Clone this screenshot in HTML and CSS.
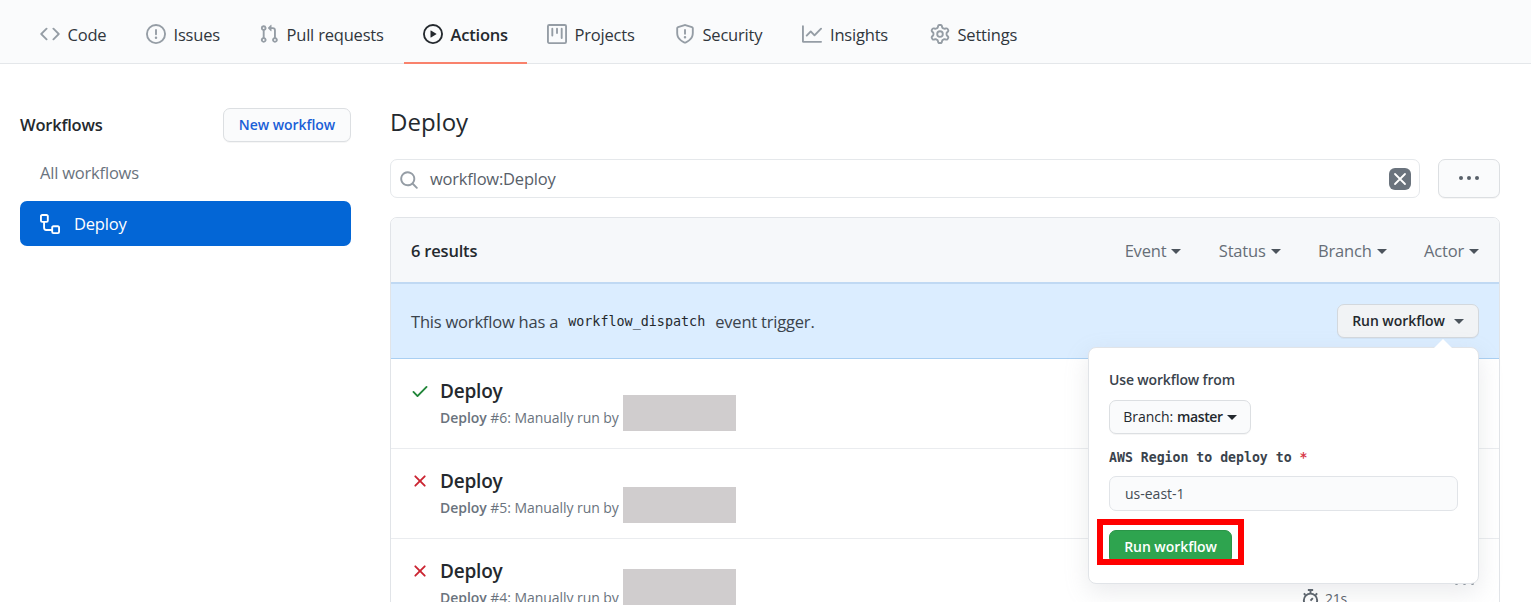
FILE: index.html
```html
<!DOCTYPE html>
<html lang="en">

<head>
    <meta charset="UTF-8">
    <meta name="viewport" content="width=device-width, initial-scale=1.0">
    <title>Actions - Deploy</title>
    <link rel="stylesheet" href="styles.css">
</head>

<body>
    <div class="page">
        <nav class="repo-nav">
            <a class="tab"><svg class="icon" viewBox="0 0 16 16"><path d="M4.72 3.22a.75.75 0 011.06 1.06L2.06 8l3.72 3.72a.75.75 0 11-1.06 1.06L.47 8.53a.75.75 0 010-1.06l4.25-4.25zm6.56 0a.75.75 0 10-1.06 1.06L13.94 8l-3.72 3.72a.75.75 0 101.06 1.06l4.25-4.25a.75.75 0 000-1.06l-4.25-4.25z"/></svg><span>Code</span></a>
            <a class="tab"><svg class="icon" viewBox="0 0 16 16"><path fill-rule="evenodd" d="M8 1.5a6.5 6.5 0 100 13 6.5 6.5 0 000-13zM0 8a8 8 0 1116 0A8 8 0 010 8zm9 3a1 1 0 11-2 0 1 1 0 012 0zm-.25-6.25a.75.75 0 00-1.5 0v3.5a.75.75 0 001.5 0v-3.5z"/></svg><span>Issues</span></a>
            <a class="tab"><svg class="icon" viewBox="0 0 16 16"><path fill-rule="evenodd" d="M7.177 3.073L9.573.677A.25.25 0 0110 .854v4.792a.25.25 0 01-.427.177L7.177 3.427a.25.25 0 010-.354zM3.75 2.5a.75.75 0 100 1.5.75.75 0 000-1.5zm-2.25.75a2.25 2.25 0 113 2.122v5.256a2.251 2.251 0 11-1.5 0V5.372A2.25 2.25 0 011.5 3.25zM11 2.5h-1V4h1a1 1 0 011 1v5.628a2.251 2.251 0 101.5 0V5A2.5 2.5 0 0011 2.5zm1 10.25a.75.75 0 111.5 0 .75.75 0 01-1.5 0zM3.75 12a.75.75 0 100 1.5.75.75 0 000-1.5z"/></svg><span>Pull requests</span></a>
            <a class="tab selected"><svg class="icon" viewBox="0 0 16 16"><path fill-rule="evenodd" d="M1.5 8a6.5 6.5 0 1113 0 6.5 6.5 0 01-13 0zM8 0a8 8 0 100 16A8 8 0 008 0zM6.379 5.227A.25.25 0 006 5.442v5.117a.25.25 0 00.379.214l4.264-2.559a.25.25 0 000-.428L6.379 5.227z"/></svg><span>Actions</span></a>
            <a class="tab"><svg class="icon" viewBox="0 0 16 16"><path fill-rule="evenodd" d="M1.75 0A1.75 1.75 0 000 1.75v12.5C0 15.216.784 16 1.75 16h12.5A1.75 1.75 0 0016 14.25V1.75A1.75 1.75 0 0014.25 0H1.75zM1.5 1.75a.25.25 0 01.25-.25h12.5a.25.25 0 01.25.25v12.5a.25.25 0 01-.25.25H1.75a.25.25 0 01-.25-.25V1.75zM11.75 3a.75.75 0 00-.75.75v7.5a.75.75 0 001.5 0v-7.5a.75.75 0 00-.75-.75zm-8.25.75a.75.75 0 011.5 0v5.5a.75.75 0 01-1.5 0v-5.5zM8 3a.75.75 0 00-.75.75v3.5a.75.75 0 001.5 0v-3.5A.75.75 0 008 3z"/></svg><span>Projects</span></a>
            <a class="tab"><svg class="icon" viewBox="0 0 16 16"><path fill-rule="evenodd" d="M7.467.133a1.75 1.75 0 011.066 0l5.25 1.68A1.75 1.75 0 0115 3.48V7c0 1.566-.32 3.182-1.303 4.682-.983 1.498-2.585 2.813-5.032 3.855a1.7 1.7 0 01-1.33 0c-2.447-1.042-4.049-2.357-5.032-3.855C1.32 10.182 1 8.566 1 7V3.48a1.75 1.75 0 011.217-1.667l5.25-1.68zm.61 1.429a.25.25 0 00-.153 0l-5.25 1.68a.25.25 0 00-.174.238V7c0 1.358.275 2.666 1.057 3.86.784 1.194 2.121 2.34 4.366 3.297a.2.2 0 00.154 0c2.245-.956 3.582-2.104 4.366-3.298C13.225 9.666 13.5 8.36 13.5 7V3.48a.25.25 0 00-.174-.237l-5.25-1.68zM9 10.5a1 1 0 11-2 0 1 1 0 012 0zm-.25-5.75a.75.75 0 10-1.5 0v3a.75.75 0 001.5 0v-3z"/></svg><span>Security</span></a>
            <a class="tab"><svg class="icon" viewBox="0 0 16 16"><path fill-rule="evenodd" d="M1.5 1.75a.75.75 0 00-1.5 0v12.5c0 .414.336.75.75.75h14.5a.75.75 0 000-1.5H1.5V1.75zm14.28 2.53a.75.75 0 00-1.06-1.06L10 7.94 7.53 5.47a.75.75 0 00-1.06 0L3.22 8.72a.75.75 0 001.06 1.06L7 7.06l2.47 2.47a.75.75 0 001.06 0l5.25-5.25z"/></svg><span>Insights</span></a>
            <a class="tab"><svg class="icon" viewBox="0 0 16 16"><path fill-rule="evenodd" d="M7.429 1.525a6.593 6.593 0 011.142 0c.036.003.108.036.137.146l.289 1.105c.147.56.55.967.997 1.189.174.086.341.183.501.29.417.278.97.423 1.53.27l1.102-.303c.11-.03.175.016.195.046.219.31.41.641.573.989.014.031.022.11-.059.19l-.815.806c-.411.406-.562.957-.53 1.456a4.588 4.588 0 010 .582c-.032.499.119 1.05.53 1.456l.815.806c.08.08.073.159.059.19a6.494 6.494 0 01-.573.99c-.02.029-.086.074-.195.045l-1.103-.303c-.559-.153-1.112-.008-1.529.27-.16.107-.327.204-.5.29-.449.222-.851.628-.998 1.189l-.289 1.105c-.029.11-.101.143-.137.146a6.613 6.613 0 01-1.142 0c-.036-.003-.108-.037-.137-.146l-.289-1.105c-.147-.56-.55-.967-.997-1.189a4.502 4.502 0 01-.501-.29c-.417-.278-.97-.423-1.53-.27l-1.102.303c-.11.03-.175-.016-.195-.046a6.492 6.492 0 01-.573-.989c-.014-.031-.022-.11.059-.19l.815-.806c.411-.406.562-.957.53-1.456a4.587 4.587 0 010-.582c.032-.499-.119-1.05-.53-1.456l-.815-.806c-.08-.08-.073-.159-.059-.19a6.44 6.44 0 01.573-.99c.02-.029.086-.075.195-.045l1.103.303c.559.153 1.112.008 1.529-.27.16-.107.327-.204.5-.29.449-.222.851-.628.998-1.189l.289-1.105c.029-.11.101-.143.137-.146zM8 0c-.236 0-.47.01-.701.03-.743.065-1.29.615-1.458 1.261l-.29 1.106c-.017.066-.078.158-.211.224a5.994 5.994 0 00-.668.386c-.123.082-.233.09-.3.071L3.27 2.776c-.644-.177-1.392.02-1.82.63a7.977 7.977 0 00-.704 1.217c-.315.675-.111 1.422.363 1.891l.815.806c.05.048.098.147.088.294a6.084 6.084 0 000 .772c.01.147-.038.246-.088.294l-.815.806c-.474.469-.678 1.216-.363 1.891.2.428.436.835.704 1.218.428.609 1.176.806 1.82.63l1.103-.303c.066-.019.176-.011.299.071.213.143.436.272.668.386.133.066.194.158.212.224l.289 1.106c.169.646.715 1.196 1.458 1.26a8.094 8.094 0 001.402 0c.743-.064 1.29-.614 1.458-1.26l.29-1.106c.017-.066.078-.158.211-.224a5.98 5.98 0 00.668-.386c.123-.082.233-.09.3-.071l1.102.302c.644.177 1.392-.02 1.82-.63.268-.382.505-.789.704-1.217.315-.675.111-1.422-.364-1.891l-.814-.806c-.05-.048-.098-.147-.088-.294a6.1 6.1 0 000-.772c-.01-.147.039-.246.088-.294l.814-.806c.475-.469.679-1.216.364-1.891a7.992 7.992 0 00-.704-1.218c-.428-.609-1.176-.806-1.82-.63l-1.103.303c-.066.019-.176.011-.299-.071a5.991 5.991 0 00-.668-.386c-.133-.066-.194-.158-.212-.224L10.16 1.29C9.99.645 9.444.095 8.701.031A8.094 8.094 0 008 0zm1.5 8a1.5 1.5 0 11-3 0 1.5 1.5 0 013 0zM11 8a3 3 0 11-6 0 3 3 0 016 0z"/></svg><span>Settings</span></a>
        </nav>

        <div class="layout">
            <aside class="sidebar">
                <div class="sidebar-head">
                    <h2>Workflows</h2>
                    <button class="btn btn-new">New workflow</button>
                </div>
                <a class="side-link">All workflows</a>
                <a class="side-link active">
                    <svg class="icon" viewBox="0 0 16 16"><path fill-rule="evenodd" d="M0 1.75C0 .784.784 0 1.75 0h3.5C6.216 0 7 .784 7 1.75v3.5A1.75 1.75 0 015.25 7H4v4a1 1 0 001 1h4v-1.25C9 9.784 9.784 9 10.75 9h3.5c.966 0 1.75.784 1.75 1.75v3.5A1.75 1.75 0 0114.25 16h-3.5A1.75 1.75 0 019 14.25v-.75H5A2.5 2.5 0 012.5 11V7h-.75A1.75 1.75 0 010 5.25v-3.5zm1.75-.25a.25.25 0 00-.25.25v3.5c0 .138.112.25.25.25h3.5a.25.25 0 00.25-.25v-3.5a.25.25 0 00-.25-.25h-3.5zm9 9a.25.25 0 00-.25.25v3.5c0 .138.112.25.25.25h3.5a.25.25 0 00.25-.25v-3.5a.25.25 0 00-.25-.25h-3.5z"/></svg>
                    <span>Deploy</span>
                </a>
            </aside>

            <main class="main">
                <h1>Deploy</h1>
                <div class="search-row">
                    <div class="search">
                        <svg class="icon" viewBox="0 0 16 16"><path fill-rule="evenodd" d="M11.5 7a4.499 4.499 0 11-8.998 0A4.499 4.499 0 0111.5 7zm-.82 4.74a6 6 0 111.06-1.06l3.04 3.04a.75.75 0 11-1.06 1.06l-3.04-3.04z"/></svg>
                        <span>workflow:Deploy</span>
                        <i class="clear"><svg viewBox="0 0 22 22"><path d="M6 6l10 10M16 6L6 16"/></svg></i>
                    </div>
                    <button class="btn btn-more"><i></i><i></i><i></i></button>
                </div>

                <section class="card">
                    <header class="card-head">
                        <strong>6 results</strong>
                        <div class="filters">
                            <span>Event<b class="caret"></b></span>
                            <span>Status<b class="caret"></b></span>
                            <span>Branch<b class="caret"></b></span>
                            <span>Actor<b class="caret"></b></span>
                        </div>
                    </header>

                    <div class="banner">
                        <p><span>This workflow has a</span><code>workflow_dispatch</code><span>event trigger.</span></p>
                        <button class="btn btn-run">Run workflow<b class="caret"></b></button>

                        <div class="popover">
                            <label class="from">Use workflow from</label>
                            <button class="btn btn-branch"><span>Branch:</span><strong>master</strong><b class="caret"></b></button>
                            <label class="region">AWS Region to deploy to <em>*</em></label>
                            <div class="input">us-east-1</div>
                            <div class="submit-clip"><button class="btn btn-submit">Run workflow</button></div>
                            <div class="highlight"></div>
                        </div>
                    </div>

                    <div class="run">
                        <svg class="icon ok" viewBox="0 0 16 16"><path d="M13.78 4.22a.75.75 0 010 1.06l-7.25 7.25a.75.75 0 01-1.06 0L2.22 9.28a.75.75 0 011.06-1.06L6 10.94l6.72-6.72a.75.75 0 011.06 0z"/></svg>
                        <div class="run-info">
                            <h3>Deploy</h3>
                            <p><strong>Deploy</strong> #6: Manually run by</p>
                        </div>
                    </div>
                    <div class="run">
                        <svg class="icon fail" viewBox="0 0 16 16"><path d="M3.72 3.72a.75.75 0 011.06 0L8 6.94l3.22-3.22a.75.75 0 111.06 1.06L9.06 8l3.22 3.22a.75.75 0 11-1.06 1.06L8 9.06l-3.22 3.22a.75.75 0 01-1.06-1.06L6.94 8 3.72 4.78a.75.75 0 010-1.06z"/></svg>
                        <div class="run-info">
                            <h3>Deploy</h3>
                            <p><strong>Deploy</strong> #5: Manually run by</p>
                        </div>
                    </div>
                    <div class="run">
                        <svg class="icon fail" viewBox="0 0 16 16"><path d="M3.72 3.72a.75.75 0 011.06 0L8 6.94l3.22-3.22a.75.75 0 111.06 1.06L9.06 8l3.22 3.22a.75.75 0 11-1.06 1.06L8 9.06l-3.22 3.22a.75.75 0 01-1.06-1.06L6.94 8 3.72 4.78a.75.75 0 010-1.06z"/></svg>
                        <div class="run-info">
                            <h3>Deploy</h3>
                            <p><strong>Deploy</strong> #4: Manually run by</p>
                        </div>
                        <div class="duration">
                            <svg viewBox="0 0 16 18"><path d="M5.5 1h5M8 1v3M1.7 4.2l1.5 1.5M14.3 4.2l-1.5 1.5M8 11l2.2-2.4"/><circle cx="8" cy="10.7" r="6.3"/></svg>
                            <span>21s</span>
                        </div>
                        <div class="run-menu"><i></i><i></i><i></i></div>
                    </div>
                </section>
            </main>
        </div>
    </div>

    <!-- hidden user names -->
    <div class="mask mask-1"></div>
    <div class="mask mask-2"></div>
    <div class="mask mask-3"></div>
</body>

</html>
```
FILE: styles.css
```css
* {
    box-sizing: border-box;
}

body {
    margin: 0;
    height: 605px;
    overflow: hidden;
    position: relative;
    background: #fff;
    color: #24292e;
    font-family: "Open Sans", "Noto Sans", sans-serif;
    font-size: 16.5px;
    letter-spacing: -0.2px;
    white-space: nowrap;
}

h1, h2, h3, p {
    margin: 0;
}

.page {
    height: 602px;
    overflow: hidden;
}

.icon {
    width: 20px;
    height: 20px;
    flex: none;
    fill: currentColor;
}

.repo-nav {
    height: 64px;
    padding-left: 20px;
    display: grid;
    grid-template-columns: 106px 113px 164.5px 123.5px 128px 127.5px 127.5px 129px;
    background: #fafbfc;
    border-bottom: 1px solid #e4e7ea;
}

.tab {
    display: flex;
    align-items: center;
    gap: 8px;
    height: 64px;
    padding: 4px 0 0 19.5px;
    color: #30363c;
}

.tab .icon {
    color: #959da5;
    margin-bottom: 1px;
}

.tab.selected {
    font-weight: 600;
    color: #24292e;
    border-bottom: 2px solid #f9826c;
    padding-top: 6px;
    padding-left: 19px;
}

.tab.selected .icon {
    color: #24292e;
}

.layout {
    display: grid;
    grid-template-columns: 331px 1110px;
    column-gap: 39px;
    padding-left: 20px;
}

.sidebar {
    padding-top: 44px;
}

.sidebar-head {
    display: flex;
    justify-content: space-between;
    align-items: center;
    margin-bottom: 8px;
}

h2 {
    font-size: 16.5px;
    font-weight: 600;
    margin-bottom: 1px;
}

.btn {
    display: flex;
    align-items: center;
    justify-content: center;
    height: 34px;
    padding: 0 0 1px;
    font: 600 14px "Open Sans", "Noto Sans", sans-serif;
    letter-spacing: -0.05px;
    color: #24292e;
    background: #fafbfc;
    border: 1px solid #dcdfe2;
    border-radius: 7px;
    box-shadow: 0 1px 0 rgba(27, 31, 35, 0.04);
}

.btn-new {
    width: 128px;
    color: #1a5fd7;
}

.side-link {
    display: flex;
    align-items: center;
    height: 45px;
    margin-bottom: 6px;
    padding: 0 0 1px 20px;
    color: #6a737d;
    border-radius: 7px;
}

.side-link.active {
    gap: 14px;
    padding-bottom: 0;
    background: #0366d6;
    color: #fff;
}

.main {
    padding-top: 40px;
}

h1 {
    font-size: 24px;
    line-height: 36px;
    font-weight: 500;
    letter-spacing: 0;
}

.search-row {
    display: flex;
    justify-content: space-between;
    margin-top: 19px;
}

.search {
    display: flex;
    align-items: center;
    width: 1030px;
    height: 39px;
    padding: 0 8px 1px 8px;
    border: 1px solid #e5e8eb;
    border-radius: 7px;
    color: #586069;
}

.search .icon {
    color: #959da5;
    margin: 3px 11px 0 0;
}

.clear {
    width: 22px;
    height: 22px;
    margin: 1px 0 0 auto;
    border-radius: 6px;
    background: #6a737d;
}

.clear svg {
    display: block;
    stroke: #fff;
    stroke-width: 1.8;
    stroke-linecap: round;
}

.btn-more {
    width: 62px;
    height: 39px;
    gap: 4px;
}

.btn-more i {
    width: 4px;
    height: 4px;
    border-radius: 50%;
    background: #586069;
}

.card {
    margin-top: 19px;
    height: 500px;
    border: 1px solid #e1e4e8;
    border-radius: 7px;
}

.card-head {
    display: flex;
    align-items: center;
    justify-content: space-between;
    height: 64px;
    padding: 1px 20px 0;
    background: #f6f8fa;
    border-radius: 6px 6px 0 0;
}

.card-head strong {
    font-weight: 600;
}

.filters {
    display: flex;
    gap: 37.5px;
    color: #666e77;
}

.filters span {
    display: flex;
    align-items: center;
    gap: 5px;
}

.caret {
    border: 5px solid transparent;
    border-top-color: #4c545c;
    border-bottom: 0;
    margin-top: 2px;
}

.banner {
    position: relative;
    display: flex;
    align-items: center;
    justify-content: space-between;
    height: 77px;
    padding: 0 20px;
    background: #dbedff;
    border-top: 2px solid #c0d9f3;
    border-bottom: 1px solid #a9cff2;
    color: #3a434c;
}

.banner p {
    display: flex;
    align-items: center;
}

code {
    font: 13.4px "DejaVu Sans Mono", monospace;
    letter-spacing: 0;
    color: #24292e;
    margin: 1px 10px 0;
}

.btn-run {
    width: 142px;
    gap: 9px;
    background: #f1f3f5;
    border-color: #d3d8dd;
}

.popover {
    position: absolute;
    z-index: 2;
    top: 63px;
    right: 20px;
    width: 391px;
    height: 237px;
    padding: 20px;
    background: #fff;
    border: 1px solid #e1e4e8;
    border-radius: 8px;
    box-shadow: 0 8px 24px rgba(149, 157, 165, 0.2);
}

/* arrow that points to the button */
.popover::before {
    content: "";
    position: absolute;
    top: -9px;
    right: 26px;
    border: 9px solid transparent;
    border-top: 0;
    border-bottom-color: #fff;
}

.from {
    display: block;
    font-size: 14px;
    font-weight: 600;
    line-height: 23px;
    letter-spacing: -0.15px;
}

.btn-branch {
    width: 142px;
    margin: 9px 0 14px;
    gap: 4px;
    height: 34px;
}

.btn-branch span {
    font-weight: 400;
}

.btn-branch strong {
    font-weight: 600;
    letter-spacing: -0.4px;
}

.btn-branch .caret {
    border-top-color: #24292e;
}

.region {
    display: block;
    font: bold 13.2px/20px "DejaVu Sans Mono", monospace;
    letter-spacing: 0;
}

.region em {
    font-style: normal;
    color: #d73a49;
}

.input {
    height: 35px;
    margin-top: 8px;
    padding-left: 15px;
    font-size: 14px;
    line-height: 33px;
    letter-spacing: 0;
    color: #444c54;
    background: #fafbfc;
    border: 1px solid #e1e4e8;
    border-radius: 7px;
}

.submit-clip {
    height: 31px;
    margin-top: 19px;
    overflow: hidden;
}

.btn-submit {
    width: 123px;
    background: #2ea44f;
    border-color: #2a9548;
    color: #fff;
}

.highlight {
    position: absolute;
    left: 8px;
    top: 171px;
    width: 147px;
    height: 46px;
    border: 6px solid #f00;
}

.run {
    display: flex;
    height: 90px;
    padding: 17px 20px 0 19px;
    border-bottom: 1px solid #eaecef;
}

.run .icon {
    margin-top: 5px;
}

.ok {
    color: #22863a;
}

.fail {
    color: #cb2431;
}

.run-info {
    margin-left: 10px;
}

h3 {
    font-size: 19px;
    font-weight: 600;
    line-height: 30px;
}

.run-info p {
    font-size: 14px;
    line-height: 24px;
    letter-spacing: -0.05px;
    color: #6a737d;
}

.run-info p strong {
    font-weight: 600;
}

.duration {
    display: flex;
    align-items: center;
    gap: 6px;
    margin: 30px 108px 0 auto;
    height: 24px;
    font-size: 14px;
    color: #586069;
}

.duration svg {
    width: 17px;
    height: 19px;
    fill: none;
    stroke: #586069;
    stroke-width: 1.8;
}

.run-menu {
    display: flex;
    gap: 5px;
    margin: 26px 5px 0 0;
}

.run-menu i {
    width: 3px;
    height: 3px;
    border-radius: 50%;
    background: #8b939b;
}

.mask {
    position: absolute;
    left: 623px;
    width: 113px;
    height: 36px;
    background: #d0cdce;
}

.mask-1 {
    top: 395px;
}

.mask-2 {
    top: 487px;
}

.mask-3 {
    top: 569px;
}
```
